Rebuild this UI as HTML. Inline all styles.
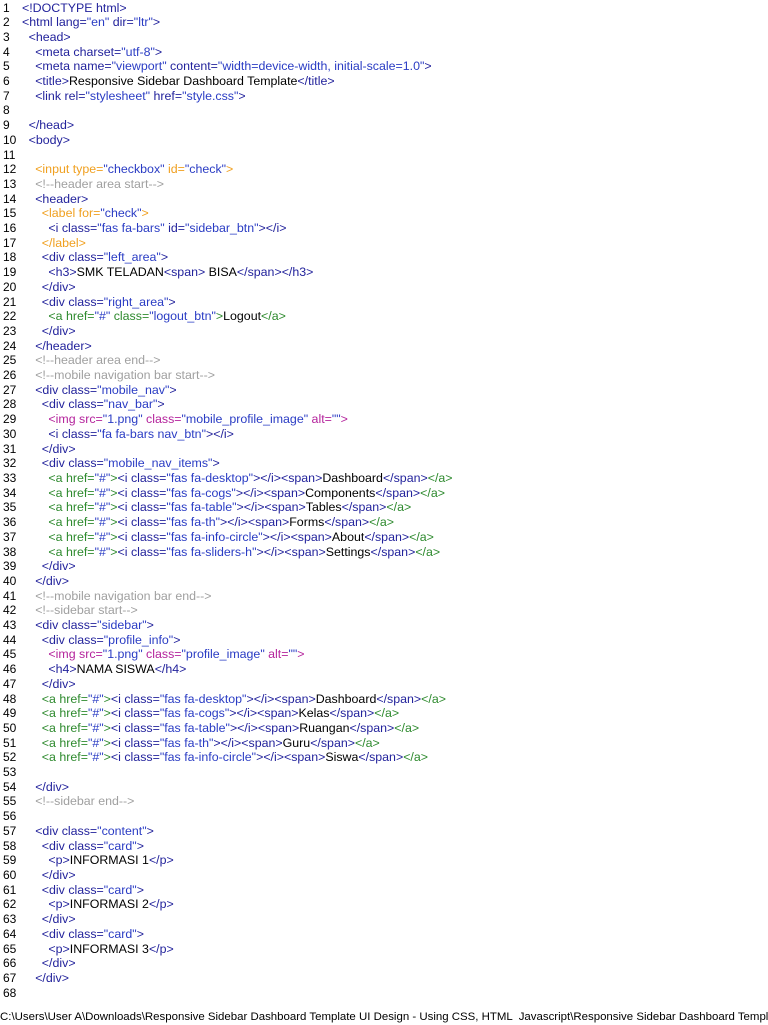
<!DOCTYPE html>
<html><head><meta charset="utf-8"><style>
body{margin:0;width:768px;height:1024px;background:#fff;position:relative;overflow:hidden;font-family:"Liberation Sans",Arial,sans-serif;font-size:12.4px;}
#w{position:absolute;left:0;top:0.5px;width:768px;}
#w div{position:relative;height:14.716px;line-height:15px;white-space:pre;color:#23239c;padding-left:22px;}
#w div b{font-weight:normal;position:absolute;left:3px;top:0;color:#000;font-size:12px;}
.i1{padding-left:28.6px!important}.i2{padding-left:35.2px!important}.i3{padding-left:41.8px!important}.i4{padding-left:48.4px!important}
.v{color:#2a3cc4}.k{color:#000}.o{color:#f0a020}.m{color:#b4239c}.g{color:#2e8a2e}.x{color:#a0a0a0}
#f{position:absolute;left:0;top:1010px;line-height:15px;white-space:pre;color:#000;font-size:11.45px;}
</style></head><body>
<div id="w">
<div><b>1</b>&lt;!DOCTYPE html&gt;</div>
<div><b>2</b>&lt;html lang=<span class=v>"en"</span> dir=<span class=v>"ltr"</span>&gt;</div>
<div class=i1><b>3</b>&lt;head&gt;</div>
<div class=i2><b>4</b>&lt;meta charset=<span class=v>"utf-8"</span>&gt;</div>
<div class=i2><b>5</b>&lt;meta name=<span class=v>"viewport"</span> content=<span class=v>"width=device-width, initial-scale=1.0"</span>&gt;</div>
<div class=i2><b>6</b>&lt;title&gt;<span class=k>Responsive Sidebar Dashboard Template</span>&lt;/title&gt;</div>
<div class=i2><b>7</b>&lt;link rel=<span class=v>"stylesheet"</span> href=<span class=v>"style.css"</span>&gt;</div>
<div><b>8</b></div>
<div class=i1><b>9</b>&lt;/head&gt;</div>
<div class=i1><b>10</b>&lt;body&gt;</div>
<div><b>11</b></div>
<div class=i2><b>12</b><span class=o>&lt;input type=</span><span class=v>"checkbox"</span><span class=o> id=</span><span class=v>"check"</span><span class=o>&gt;</span></div>
<div class=i2><b>13</b><span class=x>&lt;!--header area start--&gt;</span></div>
<div class=i2><b>14</b>&lt;header&gt;</div>
<div class=i3><b>15</b><span class=o>&lt;label for=</span><span class=v>"check"</span><span class=o>&gt;</span></div>
<div class=i4><b>16</b>&lt;i class=<span class=v>"fas fa-bars"</span> id=<span class=v>"sidebar_btn"</span>&gt;&lt;/i&gt;</div>
<div class=i3><b>17</b><span class=o>&lt;/label&gt;</span></div>
<div class=i3><b>18</b>&lt;div class=<span class=v>"left_area"</span>&gt;</div>
<div class=i4><b>19</b>&lt;h3&gt;<span class=k>SMK TELADAN</span>&lt;span&gt;<span class=k> BISA</span>&lt;/span&gt;&lt;/h3&gt;</div>
<div class=i3><b>20</b>&lt;/div&gt;</div>
<div class=i3><b>21</b>&lt;div class=<span class=v>"right_area"</span>&gt;</div>
<div class=i4><b>22</b><span class=g>&lt;a href=</span><span class=v>"#"</span><span class=g> class=</span><span class=v>"logout_btn"</span><span class=g>&gt;</span><span class=k>Logout</span><span class=g>&lt;/a&gt;</span></div>
<div class=i3><b>23</b>&lt;/div&gt;</div>
<div class=i2><b>24</b>&lt;/header&gt;</div>
<div class=i2><b>25</b><span class=x>&lt;!--header area end--&gt;</span></div>
<div class=i2><b>26</b><span class=x>&lt;!--mobile navigation bar start--&gt;</span></div>
<div class=i2><b>27</b>&lt;div class=<span class=v>"mobile_nav"</span>&gt;</div>
<div class=i3><b>28</b>&lt;div class=<span class=v>"nav_bar"</span>&gt;</div>
<div class=i4><b>29</b><span class=m>&lt;img src=</span><span class=v>"1.png"</span><span class=m> class=</span><span class=v>"mobile_profile_image"</span><span class=m> alt=</span><span class=v>""</span><span class=m>&gt;</span></div>
<div class=i4><b>30</b>&lt;i class=<span class=v>"fa fa-bars nav_btn"</span>&gt;&lt;/i&gt;</div>
<div class=i3><b>31</b>&lt;/div&gt;</div>
<div class=i3><b>32</b>&lt;div class=<span class=v>"mobile_nav_items"</span>&gt;</div>
<div class=i4><b>33</b><span class=g>&lt;a href=</span><span class=v>"#"</span><span class=g>&gt;</span>&lt;i class=<span class=v>"fas fa-desktop"</span>&gt;&lt;/i&gt;&lt;span&gt;<span class=k>Dashboard</span>&lt;/span&gt;<span class=g>&lt;/a&gt;</span></div>
<div class=i4><b>34</b><span class=g>&lt;a href=</span><span class=v>"#"</span><span class=g>&gt;</span>&lt;i class=<span class=v>"fas fa-cogs"</span>&gt;&lt;/i&gt;&lt;span&gt;<span class=k>Components</span>&lt;/span&gt;<span class=g>&lt;/a&gt;</span></div>
<div class=i4><b>35</b><span class=g>&lt;a href=</span><span class=v>"#"</span><span class=g>&gt;</span>&lt;i class=<span class=v>"fas fa-table"</span>&gt;&lt;/i&gt;&lt;span&gt;<span class=k>Tables</span>&lt;/span&gt;<span class=g>&lt;/a&gt;</span></div>
<div class=i4><b>36</b><span class=g>&lt;a href=</span><span class=v>"#"</span><span class=g>&gt;</span>&lt;i class=<span class=v>"fas fa-th"</span>&gt;&lt;/i&gt;&lt;span&gt;<span class=k>Forms</span>&lt;/span&gt;<span class=g>&lt;/a&gt;</span></div>
<div class=i4><b>37</b><span class=g>&lt;a href=</span><span class=v>"#"</span><span class=g>&gt;</span>&lt;i class=<span class=v>"fas fa-info-circle"</span>&gt;&lt;/i&gt;&lt;span&gt;<span class=k>About</span>&lt;/span&gt;<span class=g>&lt;/a&gt;</span></div>
<div class=i4><b>38</b><span class=g>&lt;a href=</span><span class=v>"#"</span><span class=g>&gt;</span>&lt;i class=<span class=v>"fas fa-sliders-h"</span>&gt;&lt;/i&gt;&lt;span&gt;<span class=k>Settings</span>&lt;/span&gt;<span class=g>&lt;/a&gt;</span></div>
<div class=i3><b>39</b>&lt;/div&gt;</div>
<div class=i2><b>40</b>&lt;/div&gt;</div>
<div class=i2><b>41</b><span class=x>&lt;!--mobile navigation bar end--&gt;</span></div>
<div class=i2><b>42</b><span class=x>&lt;!--sidebar start--&gt;</span></div>
<div class=i2><b>43</b>&lt;div class=<span class=v>"sidebar"</span>&gt;</div>
<div class=i3><b>44</b>&lt;div class=<span class=v>"profile_info"</span>&gt;</div>
<div class=i4><b>45</b><span class=m>&lt;img src=</span><span class=v>"1.png"</span><span class=m> class=</span><span class=v>"profile_image"</span><span class=m> alt=</span><span class=v>""</span><span class=m>&gt;</span></div>
<div class=i4><b>46</b>&lt;h4&gt;<span class=k>NAMA SISWA</span>&lt;/h4&gt;</div>
<div class=i3><b>47</b>&lt;/div&gt;</div>
<div class=i3><b>48</b><span class=g>&lt;a href=</span><span class=v>"#"</span><span class=g>&gt;</span>&lt;i class=<span class=v>"fas fa-desktop"</span>&gt;&lt;/i&gt;&lt;span&gt;<span class=k>Dashboard</span>&lt;/span&gt;<span class=g>&lt;/a&gt;</span></div>
<div class=i3><b>49</b><span class=g>&lt;a href=</span><span class=v>"#"</span><span class=g>&gt;</span>&lt;i class=<span class=v>"fas fa-cogs"</span>&gt;&lt;/i&gt;&lt;span&gt;<span class=k>Kelas</span>&lt;/span&gt;<span class=g>&lt;/a&gt;</span></div>
<div class=i3><b>50</b><span class=g>&lt;a href=</span><span class=v>"#"</span><span class=g>&gt;</span>&lt;i class=<span class=v>"fas fa-table"</span>&gt;&lt;/i&gt;&lt;span&gt;<span class=k>Ruangan</span>&lt;/span&gt;<span class=g>&lt;/a&gt;</span></div>
<div class=i3><b>51</b><span class=g>&lt;a href=</span><span class=v>"#"</span><span class=g>&gt;</span>&lt;i class=<span class=v>"fas fa-th"</span>&gt;&lt;/i&gt;&lt;span&gt;<span class=k>Guru</span>&lt;/span&gt;<span class=g>&lt;/a&gt;</span></div>
<div class=i3><b>52</b><span class=g>&lt;a href=</span><span class=v>"#"</span><span class=g>&gt;</span>&lt;i class=<span class=v>"fas fa-info-circle"</span>&gt;&lt;/i&gt;&lt;span&gt;<span class=k>Siswa</span>&lt;/span&gt;<span class=g>&lt;/a&gt;</span></div>
<div><b>53</b></div>
<div class=i2><b>54</b>&lt;/div&gt;</div>
<div class=i2><b>55</b><span class=x>&lt;!--sidebar end--&gt;</span></div>
<div><b>56</b></div>
<div class=i2><b>57</b>&lt;div class=<span class=v>"content"</span>&gt;</div>
<div class=i3><b>58</b>&lt;div class=<span class=v>"card"</span>&gt;</div>
<div class=i4><b>59</b>&lt;p&gt;<span class=k>INFORMASI 1</span>&lt;/p&gt;</div>
<div class=i3><b>60</b>&lt;/div&gt;</div>
<div class=i3><b>61</b>&lt;div class=<span class=v>"card"</span>&gt;</div>
<div class=i4><b>62</b>&lt;p&gt;<span class=k>INFORMASI 2</span>&lt;/p&gt;</div>
<div class=i3><b>63</b>&lt;/div&gt;</div>
<div class=i3><b>64</b>&lt;div class=<span class=v>"card"</span>&gt;</div>
<div class=i4><b>65</b>&lt;p&gt;<span class=k>INFORMASI 3</span>&lt;/p&gt;</div>
<div class=i3><b>66</b>&lt;/div&gt;</div>
<div class=i2><b>67</b>&lt;/div&gt;</div>
<div><b>68</b></div>
</div>
<div id="f">C:\Users\User A\Downloads\Responsive Sidebar Dashboard Template UI Design - Using CSS, HTML  Javascript\Responsive Sidebar Dashboard Template</div>
</body></html>
